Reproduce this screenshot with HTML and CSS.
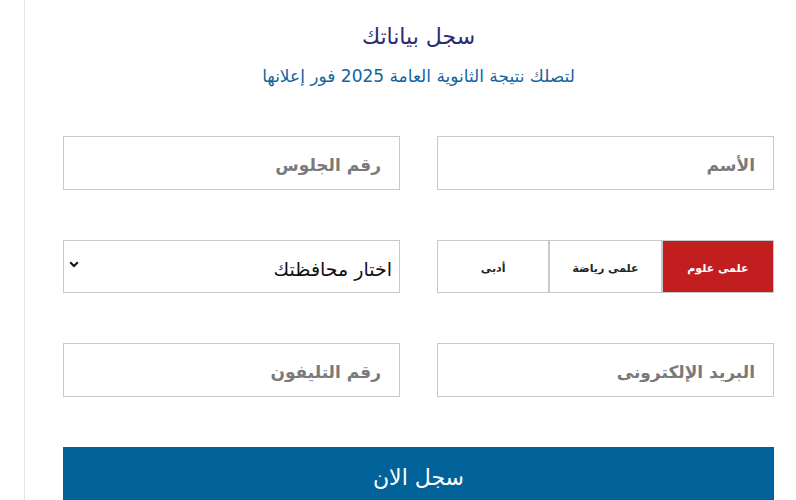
FILE: index.html
```html
<!DOCTYPE html>
<html lang="ar" dir="rtl">
<head>
<meta charset="utf-8">
<link rel="stylesheet" href="styles.css">
</head>
<body>
<div class="page">
  <form class="reg">
    <h2 class="title">سجل بياناتك</h2>
    <p class="sub">لتصلك نتيجة الثانوية العامة 2025 فور إعلانها</p>
    <div class="grid">
      <input class="field" type="text" placeholder="الأسم">
      <input class="field" type="text" placeholder="رقم الجلوس">
      <div class="seg">
        <span class="opt active">علمى علوم</span>
        <span class="opt">علمى رياضة</span>
        <span class="opt">أدبى</span>
      </div>
      <div class="select">
        <span class="sel-text">اختار محافظتك</span>
        <svg class="chev" width="10" height="7" viewBox="0 0 10 7"><path d="M1.2 1.2 L5 5 L8.8 1.2" fill="none" stroke="#111" stroke-width="2"/></svg>
      </div>
      <input class="field" type="text" placeholder="البريد الإلكترونى">
      <input class="field" type="text" placeholder="رقم التليفون">
    </div>
    <button class="submit" type="button">سجل الان</button>
  </form>
</div>
</body>
</html>
```
FILE: styles.css
```css
html, body {
  margin: 0;
  padding: 0;
  background: #fff;
  font-family: "DejaVu Sans", "Noto Sans", sans-serif;
}
.page {
  margin-left: 24px;
  border-left: 1px solid #e6e6e6;
  min-height: 500px;
  padding: 0 22px 0 38px;
}
.reg {
  display: flex;
  flex-direction: column;
}
.title {
  margin: 22px 0 0;
  text-align: center;
  font-weight: normal;
  font-size: 22px;
  line-height: 30px;
  color: #2e2a70;
}
.sub {
  margin: 12px 0 0;
  text-align: center;
  font-size: 17px;
  line-height: 24px;
  color: #13649e;
}
.grid {
  margin-top: 48px;
  display: grid;
  grid-template-columns: 1fr 1fr;
  column-gap: 37px;
  row-gap: 50px;
}
.field, .select, .seg {
  box-sizing: border-box;
  height: 54px;
  border: 1px solid #c9c9c9;
  background: #fff;
}
.field {
  width: 100%;
  padding: 4px 18px 0;
  font-family: inherit;
  font-size: 17px;
  font-weight: bold;
  color: #333;
  outline: none;
}
.field::placeholder {
  color: #7a7a7a;
}
.seg {
  display: flex;
  height: 53px;
}
.opt {
  flex: 1;
  display: flex;
  align-items: center;
  justify-content: center;
  padding-top: 3px;
  font-size: 11px;
  font-weight: bold;
  color: #222;
  border-left: 2px solid #c9c9c9;
}
.opt:last-child {
  border-left: 0;
}
.opt.active {
  background: #c21e20;
  color: #fff;
}
.select {
  height: 53px;
  display: flex;
  align-items: center;
  justify-content: space-between;
  padding: 0 7px 0 5px;
}
.sel-text {
  font-size: 19px;
  color: #111;
  padding-top: 4px;
}
.chev {
  margin-bottom: 4px;
}
.submit {
  margin-top: 50px;
  height: 60px;
  border: 0;
  background: #01639a;
  color: #fff;
  font-family: inherit;
  font-size: 22px;
  padding: 0;
}
```
